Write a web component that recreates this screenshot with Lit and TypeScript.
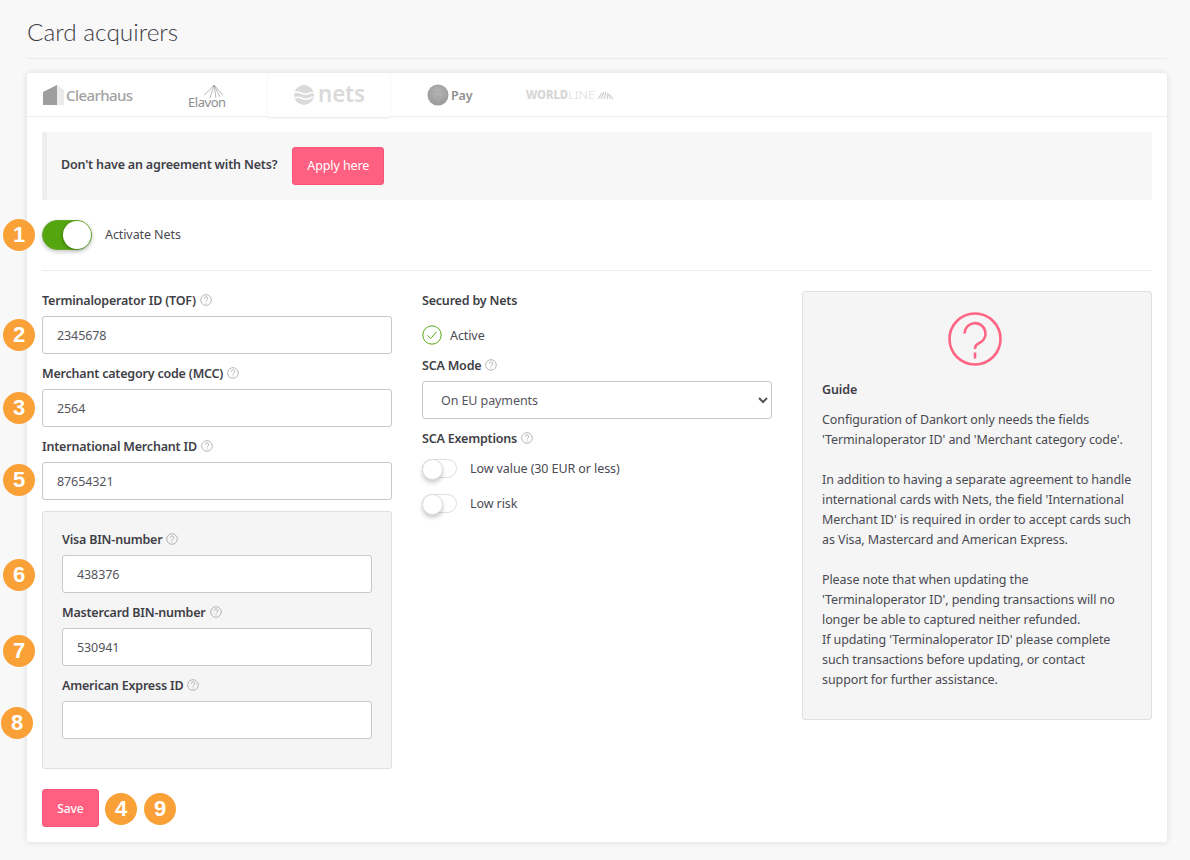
import { LitElement, html, css } from 'lit';
import { customElement } from 'lit/decorators.js';

const helpIcon = html`<svg class="help" viewBox="0 0 12 12" fill="none" stroke="#a3a3a3" stroke-width="0.8">
  <circle cx="6" cy="6" r="5.3"></circle>
  <path d="M4.3 4.7a1.75 1.75 0 1 1 2.6 1.5c-.6.35-.9.7-.9 1.3M6 8.400v1"></path>
</svg>`;

@customElement('app-root')
export class AppRoot extends LitElement {
  static styles = css`
    :host {
      display: block;
      min-height: 860px;
      background: #f8f8f8;
      font-family: 'Noto Sans', sans-serif;
      font-size: 12.5px;
      letter-spacing: -0.09px;
      color: #4a4a52;
      box-sizing: border-box;
      padding: 18px 23px 18px 27px;
    }

    * {
      box-sizing: border-box;
    }

    h1 {
      margin: 0;
      height: 41px;
      border-bottom: 1px solid #ececec;
      font-family: 'Lato', sans-serif;
      font-weight: 300;
      font-size: 24.4px;
      line-height: 28px;
      letter-spacing: 0;
      color: #3b3b44;
    }

    .card {
      margin-top: 14px;
      background: #fff;
      border-radius: 3px;
      box-shadow: 0 0 6px rgba(0, 0, 0, 0.12);
      height: 769px;
    }

    .tabs {
      display: flex;
      height: 44px;
      border-bottom: 1px solid #eeeeee;
    }

    .tab {
      display: flex;
      align-items: center;
      justify-content: center;
      height: 44px;
    }

    .tab.active {
      justify-content: flex-start;
      padding-left: 24px;
      background: #fff;
      box-shadow: 0 1px 2px rgba(0, 0, 0, 0.1);
      border-radius: 2px 2px 0 0;
    }

    .body {
      position: relative;
      padding: 15px 15px 0;
    }

    .notice {
      display: flex;
      align-items: center;
      gap: 15px;
      height: 68px;
      padding: 0 0 0 14px;
      background: #f7f7f7;
      border-left: 5px solid #eeeeee;
      border-radius: 2px;
      font-weight: 600;
      letter-spacing: -0.18px;
      color: #3f3f47;
    }

    .notice span {
      padding-bottom: 4px;
    }

    .btn {
      display: flex;
      align-items: center;
      justify-content: center;
      background: #ff5f80;
      border: 1px solid #f5557a;
      border-radius: 3px;
      color: #fff;
    }

    .notice .btn {
      width: 92px;
      height: 38px;
      padding-bottom: 2px;
      font-size: 12.5px;
      font-weight: 400;
      letter-spacing: -0.09px;
    }

    .activate {
      display: flex;
      align-items: center;
      gap: 13px;
      height: 71px;
      padding-bottom: 1px;
      border-bottom: 1px solid #ececec;
    }

    .switch {
      position: relative;
      display: block;
      flex: none;
      width: 35px;
      height: 19px;
      border: 1px solid #dfdfdf;
      border-radius: 10px;
      background: #fff;
    }

    .switch::after {
      content: '';
      position: absolute;
      left: -1px;
      top: -1px;
      width: 19px;
      height: 19px;
      border-radius: 50%;
      background: #fff;
      border: 1px solid #dcdcdc;
      box-shadow: 0 3px 4px rgba(0, 0, 0, 0.2);
    }

    .switch.big {
      width: 50px;
      height: 30px;
      border: 1px solid #65a82b;
      border-radius: 15px;
      background: #55a510;
      box-shadow: 0 2px 4px rgba(0, 0, 0, 0.22);
    }

    .switch.big::after {
      left: auto;
      right: 0;
      top: 0;
      width: 28px;
      height: 28px;
      border: none;
      box-shadow: -1px 1px 3px rgba(0, 0, 0, 0.25);
    }

    .columns {
      display: grid;
      grid-template-columns: 350px 350px 350px;
      column-gap: 30px;
      padding-top: 20px;
    }

    .field {
      display: block;
      height: 73px;
      position: relative;
    }

    label,
    .label {
      display: flex;
      align-items: center;
      gap: 4px;
      height: 18px;
      font-weight: 600;
      letter-spacing: -0.2px;
      color: #3f3f47;
    }

    .help {
      width: 12px;
      height: 12px;
      flex: none;
    }

    input,
    select {
      display: block;
      width: 100%;
      height: 38px;
      margin-top: 7px;
      padding: 0 14px;
      border: 1px solid #c8c8c8;
      border-radius: 3px;
      background: #fff;
      color: #55555d;
      font: inherit;
      letter-spacing: -0.09px;
    }

    .bins {
      height: 258px;
      margin-top: 1px;
      padding: 18px 19px 0;
      background: #f5f5f5;
      border: 1px solid #e0e0e0;
      border-radius: 3px;
    }

    .save {
      width: 57px;
      height: 38px;
      margin-top: 20px;
      font-size: 12px;
      font-weight: 500;
    }

    .active-row {
      display: flex;
      align-items: center;
      gap: 8px;
      height: 20px;
      margin-top: 16px;
      margin-bottom: 11px;
    }

    .active-row svg {
      width: 20px;
      height: 20px;
    }

    .toggle {
      display: flex;
      align-items: center;
      gap: 13px;
      height: 20px;
      margin-bottom: 15px;
    }

    .sca-title {
      margin-bottom: 11px;
    }

    .guide {
      height: 429px;
      padding: 20px 10px 20px 19px;
      background: #f5f5f5;
      border: 1px solid #e0e0e0;
      border-radius: 3px;
      line-height: 20px;
    }

    .guide svg {
      display: block;
      width: 54px;
      height: 54px;
      margin: 0 0 14px 126px;
    }

    .guide h3 {
      margin: 0 0 10px;
      font-size: 12.5px;
      line-height: 20px;
      font-weight: 600;
      color: #3f3f47;
    }

    .guide p {
      margin: 0 0 20px;
      white-space: nowrap;
    }

    .badge {
      position: absolute;
      display: flex;
      align-items: center;
      justify-content: center;
      width: 32px;
      height: 32px;
      border-radius: 50%;
      background: #f9a137;
      color: #fff;
      font-family: 'Liberation Sans', sans-serif;
      font-weight: 700;
      font-size: 22px;
      letter-spacing: 0;
    }
  `;

  render() {
    return html`
      <h1>Card acquirers</h1>
      <div class="card">
        <div class="tabs">
          <div class="tab" style="width:121px">
            <svg width="92" height="24" viewBox="0 0 92 24">
              <path d="M0 7 14 0V20H0z" fill="#9e9e9e" transform="translate(1 2)"></path>
              <path d="M15 2 22 7V22H15z" fill="#ebebeb"></path>
              <text x="24" y="18" font-family="Noto Sans" font-size="15" font-weight="500" fill="#a2a2a2" textLength="67">Clearhaus</text>
            </svg>
          </div>
          <div class="tab" style="width:120px">
            <svg width="42" height="32" viewBox="0 0 42 32" style="margin-top:2px">
              <path d="M17 15C21 12 24 8 27 5c3 3 6 7 9 10M27 5l-4 13M27 5l2 13M27 5l6 12" fill="none" stroke="#9a9a9a" stroke-width=".7"></path>
              <text x="1" y="27" font-family="Noto Sans" font-size="13" fill="#8d8d8d" textLength="38">Elavon</text>
            </svg>
          </div>
          <div class="tab active" style="width:122px">
            <svg width="90" height="40" viewBox="0 0 90 40">
              <circle cx="12" cy="20" r="10" fill="#dadada"></circle>
              <path d="M2 18c5-4 8 3 13 1s6-2 7-1M3 23c5-3 8 3 13 1s5-2 5-2" fill="none" stroke="#fff" stroke-width="1.5"></path>
              <text x="26" y="27" font-family="Noto Sans" font-size="24" font-weight="600" fill="#dadada" textLength="47" lengthAdjust="spacingAndGlyphs">nets</text>
            </svg>
          </div>
          <div class="tab" style="width:122px">
            <svg width="48" height="24" viewBox="0 0 48 24">
              <defs>
                <radialGradient id="pay" cx="50%" cy="40%" r="60%">
                  <stop offset="0" stop-color="#b8b8b8"></stop>
                  <stop offset="1" stop-color="#989898"></stop>
                </radialGradient>
              </defs>
              <circle cx="11" cy="12" r="10.500" fill="url(#pay)"></circle>
              <path d="M11 21V10M5 12c3 2 9 2 12 0M6 8c3 2 7 2 10 0" fill="none" stroke="#a8a8a8" stroke-width="1"></path>
              <text x="24" y="17" font-family="Noto Sans" font-size="12.5" font-weight="600" fill="#8f8f8f">Pay</text>
            </svg>
          </div>
          <div class="tab" style="width:118px">
            <svg width="92" height="18" viewBox="0 0 92 18">
              <text x="1" y="13" font-family="Noto Sans" font-size="11.5" font-weight="800" fill="#d6d6d6" textLength="42" lengthAdjust="spacingAndGlyphs">WORLD</text>
              <text x="43" y="13" font-family="Noto Sans" font-size="11.5" font-weight="300" fill="#dcdcdc" textLength="27" lengthAdjust="spacingAndGlyphs">LINE</text>
              <path d="M73 13l4-6M76 13l3-7M79 13l2-7M82 13l1-6M85 13l-1-5M88 13l-3-4" stroke="#d0d0d0" stroke-width="1.2" fill="none"></path>
            </svg>
          </div>
        </div>
        <div class="body">
          <div class="notice">
            <span>Don't have an agreement with Nets?</span>
            <div class="btn">Apply here</div>
          </div>
          <div class="activate">
            <span class="switch big"></span>
            <span>Activate Nets</span>
          </div>
          <div class="columns">
            <div>
              ${this.field('Terminaloperator ID (TOF)', '2345678')}
              ${this.field('Merchant category code (MCC)', '2564')}
              ${this.field('International Merchant ID', '87654321')}
              <div class="bins">
                ${this.field('Visa BIN-number', '438376')}
                ${this.field('Mastercard BIN-number', '530941')}
                ${this.field('American Express ID', '')}
              </div>
              <div class="btn save">Save</div>
            </div>
            <div class="middle">
              <div class="label">Secured by Nets</div>
              <div class="active-row">
                <svg viewBox="0 0 20 20" fill="none" stroke="#55a510" stroke-width="1">
                  <circle cx="10" cy="10" r="9.200"></circle>
                  <path d="M5.500 10.500 8.800 13.500 14.500 6.800"></path>
                </svg>
                <span>Active</span>
              </div>
              <div class="field">
                <div class="label">SCA Mode ${helpIcon}</div>
                <select><option>On EU payments</option></select>
              </div>
              <div class="label sca-title">SCA Exemptions ${helpIcon}</div>
              <div class="toggle"><span class="switch"></span><span>Low value (30 EUR or less)</span></div>
              <div class="toggle"><span class="switch"></span><span>Low risk</span></div>
            </div>
            <div class="guide">
              <svg viewBox="0 0 54 54" fill="none" stroke="#ff6584" stroke-width="2.6">
                <circle cx="27" cy="27" r="25.500"></circle>
                <path d="M16.500 21.500a10.500 10.500 0 1 1 14.500 9.800c-2.700 1.100-4 2.500-4 5.700M27 40.500v6"></path>
              </svg>
              <h3>Guide</h3>
              <p>Configuration of Dankort only needs the fields<br>'Terminaloperator ID' and 'Merchant category code'.</p>
              <p>In addition to having a separate agreement to handle<br>international cards with Nets, the field 'International<br>Merchant ID' is required in order to accept cards such<br>as Visa, Mastercard and American Express.</p>
              <p>Please note that when updating the<br>'Terminaloperator ID', pending transactions will no<br>longer be able to captured neither refunded.<br>If updating 'Terminaloperator ID' please complete<br>such transactions before updating, or contact<br>support for further assistance.</p>
            </div>
          </div>
          ${this.pins()}
        </div>
      </div>
    `;
  }

  field(name: string, value: string) {
    return html`<div class="field">
      <label>${name} ${helpIcon}</label>
      <input .value=${value} />
    </div>`;
  }

  pins() {
    // page coordinates of the numbered callouts, body starts at 27,117
    const at: [number, number, number][] = [
      [1, 3, 219],
      [2, 3, 319],
      [3, 3, 392],
      [5, 3, 464],
      [6, 3, 559],
      [7, 3, 635],
      [8, 1, 707],
      [4, 105, 793],
      [9, 144, 793],
    ];
    return at.map(
      ([n, x, y]) => html`<span class="badge" style="left:${x - 27}px;top:${y - 117}px">${n}</span>`
    );
  }
}
